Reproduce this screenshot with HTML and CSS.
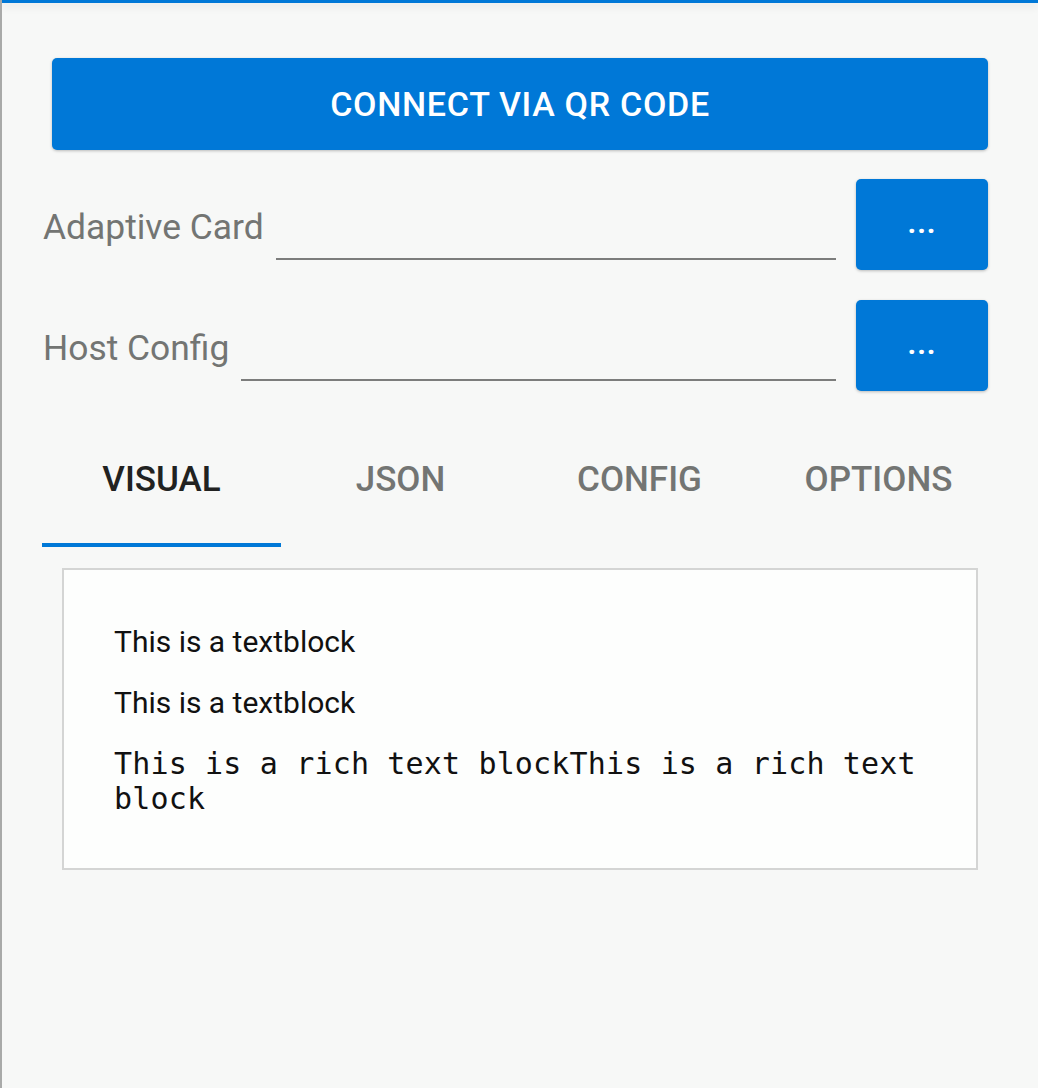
FILE: index.html
```html
<!DOCTYPE html>
<html lang="en">
<head>
    <meta charset="UTF-8">
    <title>Adaptive Cards Visualizer</title>
    <link rel="stylesheet" href="styles.css">
</head>
<body>
    <div class="app-bar"></div>
    <div class="content">
        <button class="button button-wide">CONNECT VIA QR CODE</button>

        <div class="file-row">
            <label class="field">
                <span class="field-label">Adaptive Card</span>
                <span class="field-input"></span>
            </label>
            <button class="button button-small">...</button>
        </div>

        <div class="file-row">
            <label class="field">
                <span class="field-label">Host Config</span>
                <span class="field-input"></span>
            </label>
            <button class="button button-small">...</button>
        </div>

        <!-- tabs -->
        <div class="tabs">
            <div class="tab tab-active">VISUAL</div>
            <div class="tab">JSON</div>
            <div class="tab">CONFIG</div>
            <div class="tab">OPTIONS</div>
        </div>

        <div class="card">
            <p class="textblock">This is a textblock</p>
            <p class="textblock">This is a textblock</p>
            <p class="richtext">This is a rich text blockThis is a rich text block</p>
        </div>
    </div>
</body>
</html>
```

FILE: styles.css
```css
html, body {
    height: 100%;
}
body {
    margin: 0;
    background-color: #f7f8f7;
    font-family: Roboto, "Liberation Sans", sans-serif;
    border-left: 2px solid #a9aaa9;
    box-sizing: border-box;
}
.app-bar {
    height: 3px;
    background-color: #0078d7;
    box-shadow: 0 3px 8px rgba(0, 0, 0, 0.12);
}
.content {
    padding: 55px 40px 0 40px;
}
.button {
    display: block;
    border: none;
    border-radius: 5px;
    background-color: #0078d7;
    color: white;
    font-family: Roboto, "Liberation Sans", sans-serif;
    font-weight: 500;
    font-size: 34px;
    letter-spacing: 0.7px;
    cursor: pointer;
    box-shadow: 0 1px 3px rgba(0, 0, 0, 0.25);
}
.button-wide {
    width: calc(100% - 20px);
    height: 92px;
    margin: 0 10px;
}
.file-row {
    display: flex;
    align-items: stretch;
    height: 91px;
    margin: 29px 10px 0 1px;
}
.file-row + .file-row {
    margin-top: 30px;
}
.field {
    flex: 1;
    display: flex;
    align-items: flex-end;
    padding-bottom: 10px;
    margin-right: 20px;
}
.field-label {
    font-size: 35.4px;
    line-height: 41px;
    color: #737573;
    margin-bottom: 12px;
    margin-right: 12px;
}
.field-input {
    flex: 1;
    height: 40px;
    border-bottom: 2px solid #7c7d7c;
}
.button-small {
    width: 132px;
    font-size: 30px;
    font-weight: bold;
    letter-spacing: 1px;
    padding-bottom: 6px;
}
.tabs {
    display: flex;
    margin-top: 20px;
}
.tab {
    flex: 1;
    text-align: center;
    font-size: 35px;
    font-weight: 500;
    line-height: 41px;
    color: #737573;
    padding: 48px 0 43px;
    border-bottom: 4px solid transparent;
}
.tab-active {
    color: #212221;
    border-bottom-color: #0078d7;
}
.card {
    margin: 21px 20px 0 20px;
    background-color: #fdfefd;
    border: 2px solid #d4d5d4;
    padding: 54px 50px 52px;
}
.textblock {
    margin: 0 0 26px;
    font-size: 30px;
    line-height: 35px;
    color: #111;
}
.richtext {
    margin: 0;
    font-family: "DejaVu Sans Mono", monospace;
    font-size: 30px;
    line-height: 35px;
    letter-spacing: 0.16px;
    color: #111;
}
```
